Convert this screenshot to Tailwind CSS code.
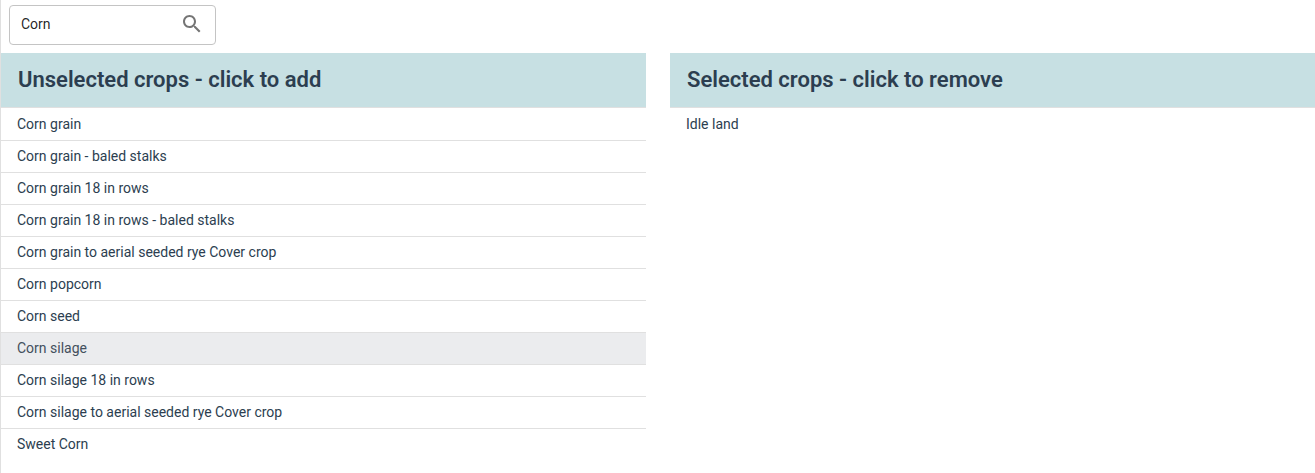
<!DOCTYPE html>
<html lang="en">
<head>
  <meta charset="UTF-8"/>
  <meta name="viewport" content="width=device-width, initial-scale=1.0"/>
  <title>Crop Selection</title>
  <script src="https://cdn.jsdelivr.net/npm/@tailwindcss/browser@4"></script>
</head>
<body class="bg-white font-[Roboto,sans-serif] text-sm text-[#2c3e50]">
  <main class="min-h-screen border-l border-[#e0e0e0]">
    <form class="px-2 pt-[5px] pb-2" onsubmit="return false">
      <div class="flex h-10 w-[207px] items-center rounded border border-[#c4c4c4] pr-[11px] pb-0.5 pl-[11px]">
        <input id="search" type="text" value="Corn" aria-label="Search crops" class="min-w-0 flex-1 text-sm text-black/87 outline-none"/>
        <button type="submit" aria-label="Search" class="text-[#757575]">
          <svg class="size-6" viewBox="0 0 24 24" fill="currentColor"><path d="M15.5 14h-.79l-.28-.27C15.41 12.59 16 11.11 16 9.5 16 5.91 13.09 3 9.5 3S3 5.91 3 9.5 5.91 16 9.5 16c1.61 0 3.09-.59 4.23-1.57l.27.28v.79l5 4.99L20.49 19l-4.99-5zm-6 0C7.01 14 5 11.99 5 9.5S7.01 5 9.5 5 14 7.01 14 9.5 11.99 14 9.5 14z"/></svg>
        </button>
      </div>
    </form>

    <div class="grid grid-cols-2 gap-6">
      <section>
        <h2 class="border-b border-[#e0e0e0] bg-[#c7e0e3] px-[17px] py-3 text-[22px] leading-[30px] font-semibold">Unselected crops - click to add</h2>
        <ul id="unselected"></ul>
      </section>
      <section>
        <h2 class="border-b border-[#e0e0e0] bg-[#c7e0e3] px-[17px] py-3 text-[22px] leading-[30px] font-semibold">Selected crops - click to remove</h2>
        <ul id="selected"></ul>
      </section>
    </div>
  </main>

  <script>
  const crops = [
    'Corn grain',
    'Corn grain - baled stalks',
    'Corn grain 18 in rows',
    'Corn grain 18 in rows - baled stalks',
    'Corn grain to aerial seeded rye Cover crop',
    'Corn popcorn',
    'Corn seed',
    'Corn silage',
    'Corn silage 18 in rows',
    'Corn silage to aerial seeded rye Cover crop',
    'Sweet Corn'
  ];
  const selected = ['Idle land'];
  const active = 'Corn silage';

  function renderList(id, list) {
    document.getElementById(id).innerHTML = list.map(name => `
      <li class="h-8 border-t border-[#e0e0e0] first:border-t-0">
        <button type="button" class="block h-full w-full px-4 pb-px text-left ${name === active ? 'bg-[#ebecee] text-[#43505d]' : 'bg-white'}">${name}</button>
      </li>
    `).join('');
  }

  renderList('unselected', crops);
  renderList('selected', selected);
  </script>
</body>
</html>
